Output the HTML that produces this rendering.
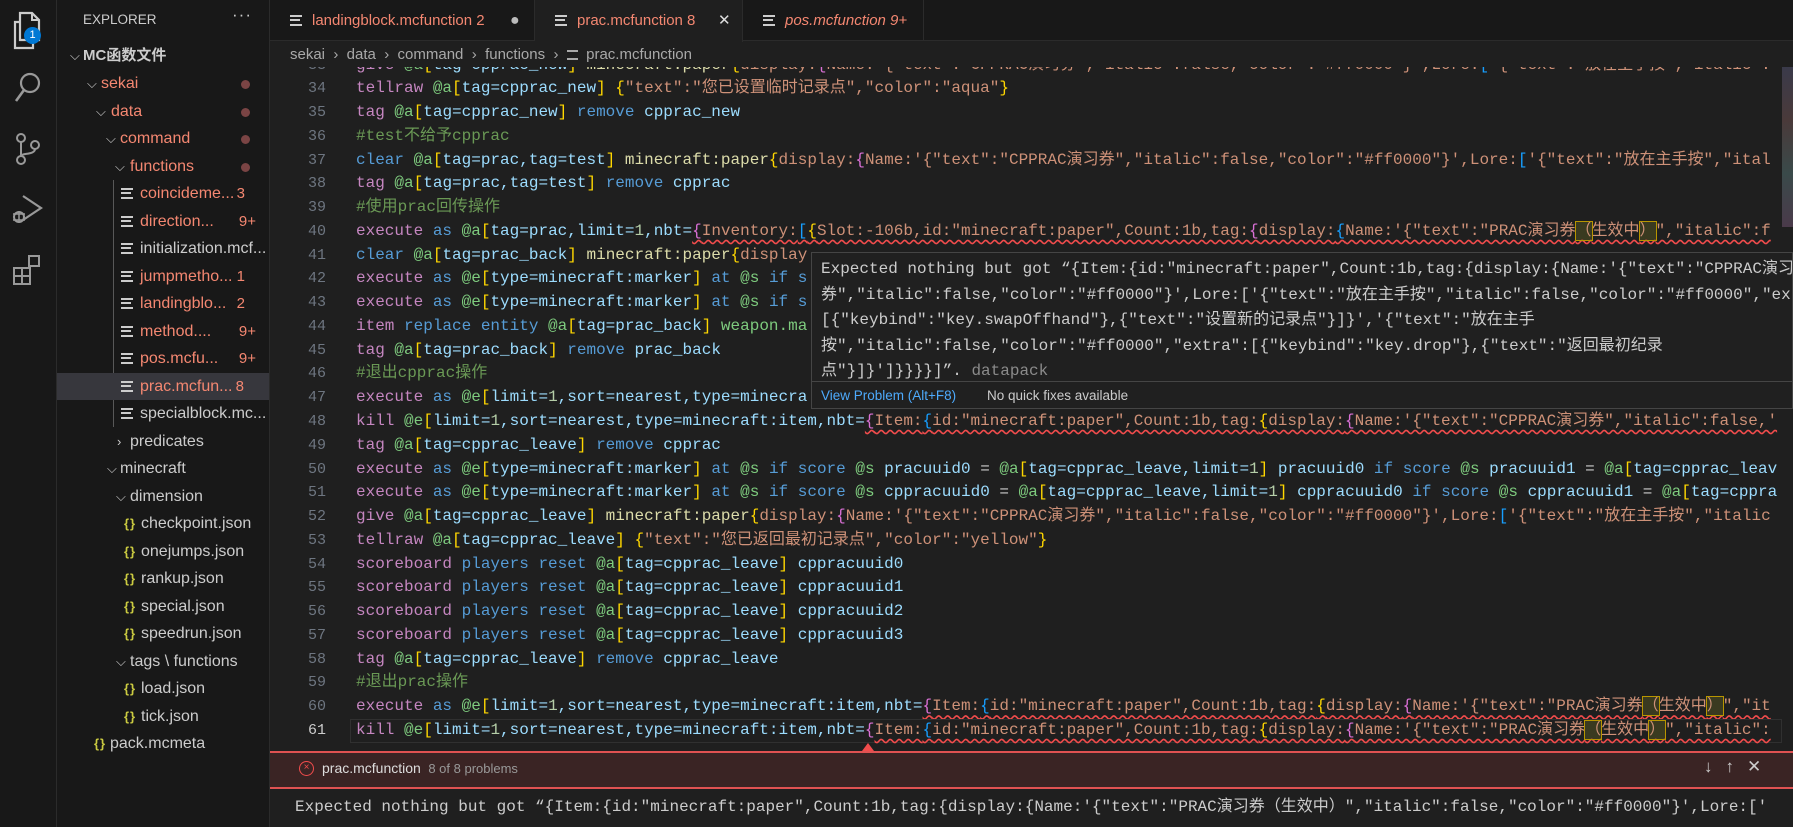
<!DOCTYPE html>
<html><head><meta charset="utf-8"><style>
*{margin:0;padding:0;box-sizing:border-box}
body{width:1793px;height:827px;overflow:hidden;background:#1f1f1f;position:relative;font-family:"Liberation Sans","Noto Sans CJK SC",sans-serif;color:#ccc}
.abs{position:absolute}
#act{left:0;top:0;width:57px;height:827px;background:#181818;border-right:1px solid #2b2b2b}
#side{left:57px;top:0;width:213px;height:827px;background:#181818;border-right:1px solid #2b2b2b;overflow:hidden}
.row{position:absolute;left:0;width:213px;height:27.5px;line-height:27.5px;font-size:16px;white-space:nowrap;color:#ccc}
.red{color:#f48771}
.chev{position:absolute;top:0;font-size:13px;color:#ccc}
.fi{position:absolute;top:8px;width:12px;height:11px;border-top:2px solid #ccc;border-bottom:2px solid #ccc}
.fi:before{content:"";position:absolute;left:0;top:2px;width:10px;height:2px;background:#ccc}
.js{position:absolute;color:#cbcb41;font-weight:bold;font-size:13px;letter-spacing:1px}
.dot{position:absolute;left:184px;top:10px;width:9px;height:9px;border-radius:50%;background:#7a4444}
.badge{position:absolute;right:20px;font-size:15px}
#tabs{left:270px;top:0;width:1523px;height:41px;background:#181818;border-bottom:1px solid #2b2b2b}
.tab{position:absolute;top:0;height:41px;line-height:41px;font-size:15px;border-right:1px solid #2b2b2b;white-space:nowrap;padding-left:42px}
.tab .ti{position:absolute;left:20px;top:15px;width:12px;height:11px;border-top:2px solid #ccc;border-bottom:2px solid #ccc}
.tab .ti:before{content:"";position:absolute;left:0;top:2px;width:10px;height:2px;background:#ccc}
#bc{left:270px;top:42px;width:1523px;height:26px;font-size:15px;line-height:26px;color:#a9a9a9;padding-left:20px;white-space:nowrap}
#ed{left:270px;top:67px;width:1512px;height:684px;overflow:hidden}
#code{position:absolute;left:0;top:-13.5px;width:1512px;font-family:"Liberation Mono","Noto Sans CJK SC",monospace;font-size:16px;line-height:23.78px;white-space:normal}
.ln{display:block;position:relative;height:23.78px}
.ln i{font-style:normal;position:absolute;left:0;width:56px;text-align:right;color:#6e7681;font-size:15px}
.ln b{font-weight:normal;position:absolute;left:86px;white-space:pre}
.k{color:#c586c0}.bl{color:#569cd6}.s{color:#7ecb7e}.y{color:#ffd700}.p{color:#da70d6}.c{color:#179fff}.v{color:#9cdcfe}.st{color:#ce9178}.cm{color:#6a9955}.n{color:#b5cea8}.id{color:#dcdcaa}.pl{color:#9cdcfe}
.sq{text-decoration:underline wavy #f14c4c;text-underline-offset:4px}
.hl{outline:1px solid #b89500;background:#3a3a20}
#hover{left:811px;top:252px;width:982px;height:157px;background:#202020;border:1px solid #454545;font-family:"Liberation Mono","Noto Sans CJK SC",monospace;font-size:16px;overflow:hidden;color:#cccccc}
#hover .t{position:absolute;left:9px;white-space:pre}
#prob{left:270px;top:751px;width:1523px;height:76px;background:#1f1f1f}
</style></head><body>
<div id="act" class="abs">
<svg class="abs" style="left:12px;top:10px" width="34" height="40" viewBox="0 0 34 40"><path d="M8 3h12l7 7v20H8z" fill="none" stroke="#ccc" stroke-width="2.2"/><path d="M20 3v7h7" fill="none" stroke="#ccc" stroke-width="2"/><path d="M8 12H3v26h18v-8" fill="none" stroke="#ccc" stroke-width="2.2"/></svg>
<div class="abs" style="left:24px;top:27px;width:17px;height:17px;border-radius:50%;background:#0078d4;color:#fff;font-size:11px;text-align:center;line-height:17px">1</div>
<svg class="abs" style="left:13px;top:71px" width="30" height="34" viewBox="0 0 30 34"><circle cx="17" cy="12" r="9" fill="none" stroke="#999" stroke-width="2.2"/><path d="M11 19L3 30" stroke="#999" stroke-width="2.6"/></svg>
<svg class="abs" style="left:14px;top:132px" width="28" height="34" viewBox="0 0 28 34"><circle cx="7" cy="6" r="4" fill="none" stroke="#999" stroke-width="2"/><circle cx="7" cy="28" r="4" fill="none" stroke="#999" stroke-width="2"/><circle cx="21" cy="13" r="4" fill="none" stroke="#999" stroke-width="2"/><path d="M7 10v14M21 17c0 6-14 4-14 7" fill="none" stroke="#999" stroke-width="2"/></svg>
<svg class="abs" style="left:11px;top:192px" width="34" height="34" viewBox="0 0 34 34"><path d="M12 4l18 12-18 12" fill="none" stroke="#999" stroke-width="2.2"/><circle cx="8" cy="25" r="5" fill="none" stroke="#999" stroke-width="2"/><path d="M2 22h12M2 28h12M8 19v12" stroke="#999" stroke-width="1.5"/></svg>
<svg class="abs" style="left:12px;top:254px" width="32" height="32" viewBox="0 0 32 32"><rect x="2" y="14" width="8" height="8" fill="none" stroke="#999" stroke-width="2"/><rect x="10" y="14" width="8" height="8" fill="none" stroke="#999" stroke-width="2"/><rect x="2" y="22" width="8" height="8" fill="none" stroke="#999" stroke-width="2"/><rect x="10" y="22" width="8" height="8" fill="none" stroke="#999" stroke-width="2"/><rect x="17" y="2" width="10" height="10" fill="none" stroke="#999" stroke-width="2"/></svg>
</div>
<div id="side" class="abs">
<div class="abs" style="left:26px;top:12px;font-size:13.5px;color:#ccc">EXPLORER</div>
<div class="abs" style="left:175px;top:5px;font-size:17px;color:#ccc;letter-spacing:1px">···</div>
<div class="row" style="top:42px"><span class="chev" style="left:13px">⌵</span><b style="position:absolute;left:26px;font-size:15px">MC函数文件</b></div>
<div class="row" style="top:70px"><span class="chev" style="left:30px">⌵</span><span class="red" style="position:absolute;left:44px">sekai</span><span class="dot"></span></div>
<div class="row" style="top:97.5px"><span class="chev" style="left:39px">⌵</span><span class="red" style="position:absolute;left:54px">data</span><span class="dot"></span></div>
<div class="row" style="top:125px"><span class="chev" style="left:49px">⌵</span><span class="red" style="position:absolute;left:63px">command</span><span class="dot"></span></div>
<div class="row" style="top:152.5px"><span class="chev" style="left:58px">⌵</span><span class="red" style="position:absolute;left:73px">functions</span><span class="dot"></span></div>
<div class="abs" style="left:56px;top:180px;width:1px;height:247px;background:#585858"></div>
<div class="row" style="top:180px"><span class="fi" style="left:64px"></span><span class="red" style="position:absolute;left:83px">coincideme...</span><span class="badge red" style="right:25px">3</span></div>
<div class="row" style="top:207.5px"><span class="fi" style="left:64px"></span><span class="red" style="position:absolute;left:83px">direction...</span><span class="badge red" style="right:14px">9+</span></div>
<div class="row" style="top:235px"><span class="fi" style="left:64px"></span><span style="position:absolute;left:83px">initialization.mcf...</span></div>
<div class="row" style="top:262.5px"><span class="fi" style="left:64px"></span><span class="red" style="position:absolute;left:83px">jumpmetho...</span><span class="badge red" style="right:25px">1</span></div>
<div class="row" style="top:290px"><span class="fi" style="left:64px"></span><span class="red" style="position:absolute;left:83px">landingblo...</span><span class="badge red" style="right:25px">2</span></div>
<div class="row" style="top:317.5px"><span class="fi" style="left:64px"></span><span class="red" style="position:absolute;left:83px">method....</span><span class="badge red" style="right:14px">9+</span></div>
<div class="row" style="top:345px"><span class="fi" style="left:64px"></span><span class="red" style="position:absolute;left:83px">pos.mcfu...</span><span class="badge red" style="right:14px">9+</span></div>
<div class="row" style="top:372.5px;background:#37373d;width:212px"><span class="fi" style="left:64px"></span><span class="red" style="position:absolute;left:83px">prac.mcfun...</span><span class="badge red" style="right:25px">8</span></div>
<div class="row" style="top:400px"><span class="fi" style="left:64px"></span><span style="position:absolute;left:83px">specialblock.mc...</span></div>
<div class="row" style="top:427.5px"><span class="chev" style="left:60px">›</span><span style="position:absolute;left:73px">predicates</span></div>
<div class="row" style="top:455px"><span class="chev" style="left:50px">⌵</span><span style="position:absolute;left:63px">minecraft</span></div>
<div class="row" style="top:482.5px"><span class="chev" style="left:59px">⌵</span><span style="position:absolute;left:73px">dimension</span></div>
<div class="row" style="top:510px"><span class="js" style="left:67px">{}</span><span style="position:absolute;left:84px">checkpoint.json</span></div>
<div class="row" style="top:537.5px"><span class="js" style="left:67px">{}</span><span style="position:absolute;left:84px">onejumps.json</span></div>
<div class="row" style="top:565px"><span class="js" style="left:67px">{}</span><span style="position:absolute;left:84px">rankup.json</span></div>
<div class="row" style="top:592.5px"><span class="js" style="left:67px">{}</span><span style="position:absolute;left:84px">special.json</span></div>
<div class="row" style="top:620px"><span class="js" style="left:67px">{}</span><span style="position:absolute;left:84px">speedrun.json</span></div>
<div class="row" style="top:647.5px"><span class="chev" style="left:59px">⌵</span><span style="position:absolute;left:73px">tags \ functions</span></div>
<div class="row" style="top:675px"><span class="js" style="left:67px">{}</span><span style="position:absolute;left:84px">load.json</span></div>
<div class="row" style="top:702.5px"><span class="js" style="left:67px">{}</span><span style="position:absolute;left:84px">tick.json</span></div>
<div class="row" style="top:730px"><span class="js" style="left:37px">{}</span><span style="position:absolute;left:53px">pack.mcmeta</span></div>
</div>
<div id="tabs" class="abs">
<div class="tab red" style="left:0;width:265px"><span class="ti"></span>landingblock.mcfunction 2 <span style="color:#bbb;position:absolute;left:240px;font-size:16px">●</span></div>
<div class="tab red" style="left:265px;width:208px;background:#1f1f1f;height:42px"><span class="ti"></span>prac.mcfunction 8 <span style="color:#ddd;position:absolute;left:183px">✕</span></div>
<div class="tab red" style="left:473px;width:181px;font-style:italic"><span class="ti"></span>pos.mcfunction 9+</div>
</div>
<div id="bc" class="abs">sekai &nbsp;›&nbsp; data &nbsp;›&nbsp; command &nbsp;›&nbsp; functions &nbsp;›&nbsp; <span style="display:inline-block;width:11px;height:10px;border-top:2px solid #aaa;border-bottom:2px solid #aaa;vertical-align:-1px"></span>&nbsp; prac.mcfunction</div>
<div id="ed" class="abs"><div id="code">
<span class="ln"><i>33</i><b><span class="k">give</span> <span class="s">@a</span><span class="y">[</span><span class="v">tag=cpprac_new</span><span class="y">]</span> <span class="id">minecraft:paper</span><span class="y">{</span><span class="st">display:</span><span class="p">{</span><span class="st">Name:'{"text":"CPPRAC演习券","italic":false,"color":"#ff0000"}',Lore:</span><span class="c">[</span><span class="st">'{"text":"放在主手按","italic":</span></b></span>
<span class="ln"><i>34</i><b><span class="k">tellraw</span> <span class="s">@a</span><span class="y">[</span><span class="v">tag=cpprac_new</span><span class="y">]</span> <span class="y">{</span><span class="st">"text":"您已设置临时记录点","color":"aqua"</span><span class="y">}</span></b></span>
<span class="ln"><i>35</i><b><span class="k">tag</span> <span class="s">@a</span><span class="y">[</span><span class="v">tag=cpprac_new</span><span class="y">]</span> <span class="bl">remove</span> <span class="pl">cpprac_new</span></b></span>
<span class="ln"><i>36</i><b><span class="cm">#test不给予cpprac</span></b></span>
<span class="ln"><i>37</i><b><span class="bl">clear</span> <span class="s">@a</span><span class="y">[</span><span class="v">tag=prac,tag=test</span><span class="y">]</span> <span class="id">minecraft:paper</span><span class="y">{</span><span class="st">display:</span><span class="p">{</span><span class="st">Name:'{"text":"CPPRAC演习券","italic":false,"color":"#ff0000"}',Lore:</span><span class="c">[</span><span class="st">'{"text":"放在主手按","ital</span></b></span>
<span class="ln"><i>38</i><b><span class="k">tag</span> <span class="s">@a</span><span class="y">[</span><span class="v">tag=prac,tag=test</span><span class="y">]</span> <span class="bl">remove</span> <span class="pl">cpprac</span></b></span>
<span class="ln"><i>39</i><b><span class="cm">#使用prac回传操作</span></b></span>
<span class="ln"><i>40</i><b><span class="k">execute</span> <span class="bl">as</span> <span class="s">@a</span><span class="y">[</span><span class="v">tag=prac,limit=</span><span class="n">1</span><span class="v">,nbt=</span><span class="sq"><span class="p">{</span><span class="st">Inventory:</span><span class="c">[</span><span class="y">{</span><span class="st">Slot:-106b,id:"minecraft:paper",Count:1b,tag:</span><span class="p">{</span><span class="st">display:</span><span class="c">{</span><span class="st">Name:'{"text":"PRAC演习券<span class="hl">（</span>生效中<span class="hl">）</span>","italic":f</span></span></b></span>
<span class="ln"><i>41</i><b><span class="bl">clear</span> <span class="s">@a</span><span class="y">[</span><span class="v">tag=prac_back</span><span class="y">]</span> <span class="id">minecraft:paper</span><span class="y">{</span><span class="st">display</span></b></span>
<span class="ln"><i>42</i><b><span class="k">execute</span> <span class="bl">as</span> <span class="s">@e</span><span class="y">[</span><span class="v">type=minecraft:marker</span><span class="y">]</span> <span class="bl">at</span> <span class="s">@s</span> <span class="bl">if</span> <span class="bl">s</span></b></span>
<span class="ln"><i>43</i><b><span class="k">execute</span> <span class="bl">as</span> <span class="s">@e</span><span class="y">[</span><span class="v">type=minecraft:marker</span><span class="y">]</span> <span class="bl">at</span> <span class="s">@s</span> <span class="bl">if</span> <span class="bl">s</span></b></span>
<span class="ln"><i>44</i><b><span class="k">item</span> <span class="bl">replace entity</span> <span class="s">@a</span><span class="y">[</span><span class="v">tag=prac_back</span><span class="y">]</span> <span class="s">weapon.ma</span></b></span>
<span class="ln"><i>45</i><b><span class="k">tag</span> <span class="s">@a</span><span class="y">[</span><span class="v">tag=prac_back</span><span class="y">]</span> <span class="bl">remove</span> <span class="pl">prac_back</span></b></span>
<span class="ln"><i>46</i><b><span class="cm">#退出cpprac操作</span></b></span>
<span class="ln"><i>47</i><b><span class="k">execute</span> <span class="bl">as</span> <span class="s">@e</span><span class="y">[</span><span class="v">limit=</span><span class="n">1</span><span class="v">,sort=nearest,type=minecra</span></b></span>
<span class="ln"><i>48</i><b><span class="k">kill</span> <span class="s">@e</span><span class="y">[</span><span class="v">limit=</span><span class="n">1</span><span class="v">,sort=nearest,type=minecraft:item,nbt=</span><span class="sq"><span class="p">{</span><span class="st">Item:</span><span class="c">{</span><span class="st">id:"minecraft:paper",Count:1b,tag:</span><span class="y">{</span><span class="st">display:</span><span class="p">{</span><span class="st">Name:'{"text":"CPPRAC演习券","italic":false,'</span></span></b></span>
<span class="ln"><i>49</i><b><span class="k">tag</span> <span class="s">@a</span><span class="y">[</span><span class="v">tag=cpprac_leave</span><span class="y">]</span> <span class="bl">remove</span> <span class="pl">cpprac</span></b></span>
<span class="ln"><i>50</i><b><span class="k">execute</span> <span class="bl">as</span> <span class="s">@e</span><span class="y">[</span><span class="v">type=minecraft:marker</span><span class="y">]</span> <span class="bl">at</span> <span class="s">@s</span> <span class="bl">if score</span> <span class="s">@s</span> <span class="pl">pracuuid0</span> = <span class="s">@a</span><span class="y">[</span><span class="v">tag=cpprac_leave,limit=</span><span class="n">1</span><span class="y">]</span> <span class="pl">pracuuid0</span> <span class="bl">if score</span> <span class="s">@s</span> <span class="pl">pracuuid1</span> = <span class="s">@a</span><span class="y">[</span><span class="v">tag=cpprac_leav</span></b></span>
<span class="ln"><i>51</i><b><span class="k">execute</span> <span class="bl">as</span> <span class="s">@e</span><span class="y">[</span><span class="v">type=minecraft:marker</span><span class="y">]</span> <span class="bl">at</span> <span class="s">@s</span> <span class="bl">if score</span> <span class="s">@s</span> <span class="pl">cppracuuid0</span> = <span class="s">@a</span><span class="y">[</span><span class="v">tag=cpprac_leave,limit=</span><span class="n">1</span><span class="y">]</span> <span class="pl">cppracuuid0</span> <span class="bl">if score</span> <span class="s">@s</span> <span class="pl">cppracuuid1</span> = <span class="s">@a</span><span class="y">[</span><span class="v">tag=cppra</span></b></span>
<span class="ln"><i>52</i><b><span class="k">give</span> <span class="s">@a</span><span class="y">[</span><span class="v">tag=cpprac_leave</span><span class="y">]</span> <span class="id">minecraft:paper</span><span class="y">{</span><span class="st">display:</span><span class="p">{</span><span class="st">Name:'{"text":"CPPRAC演习券","italic":false,"color":"#ff0000"}',Lore:</span><span class="c">[</span><span class="st">'{"text":"放在主手按","italic</span></b></span>
<span class="ln"><i>53</i><b><span class="k">tellraw</span> <span class="s">@a</span><span class="y">[</span><span class="v">tag=cpprac_leave</span><span class="y">]</span> <span class="y">{</span><span class="st">"text":"您已返回最初记录点","color":"yellow"</span><span class="y">}</span></b></span>
<span class="ln"><i>54</i><b><span class="k">scoreboard</span> <span class="bl">players reset</span> <span class="s">@a</span><span class="y">[</span><span class="v">tag=cpprac_leave</span><span class="y">]</span> <span class="pl">cppracuuid0</span></b></span>
<span class="ln"><i>55</i><b><span class="k">scoreboard</span> <span class="bl">players reset</span> <span class="s">@a</span><span class="y">[</span><span class="v">tag=cpprac_leave</span><span class="y">]</span> <span class="pl">cppracuuid1</span></b></span>
<span class="ln"><i>56</i><b><span class="k">scoreboard</span> <span class="bl">players reset</span> <span class="s">@a</span><span class="y">[</span><span class="v">tag=cpprac_leave</span><span class="y">]</span> <span class="pl">cppracuuid2</span></b></span>
<span class="ln"><i>57</i><b><span class="k">scoreboard</span> <span class="bl">players reset</span> <span class="s">@a</span><span class="y">[</span><span class="v">tag=cpprac_leave</span><span class="y">]</span> <span class="pl">cppracuuid3</span></b></span>
<span class="ln"><i>58</i><b><span class="k">tag</span> <span class="s">@a</span><span class="y">[</span><span class="v">tag=cpprac_leave</span><span class="y">]</span> <span class="bl">remove</span> <span class="pl">cpprac_leave</span></b></span>
<span class="ln"><i>59</i><b><span class="cm">#退出prac操作</span></b></span>
<span class="ln"><i>60</i><b><span class="k">execute</span> <span class="bl">as</span> <span class="s">@e</span><span class="y">[</span><span class="v">limit=</span><span class="n">1</span><span class="v">,sort=nearest,type=minecraft:item,nbt=</span><span class="sq"><span class="p">{</span><span class="st">Item:</span><span class="c">{</span><span class="st">id:"minecraft:paper",Count:1b,tag:</span><span class="y">{</span><span class="st">display:</span><span class="p">{</span><span class="st">Name:'{"text":"PRAC演习券<span class="hl">（</span>生效中<span class="hl">）</span>","it</span></span></b></span>
<span class="ln" style="outline:1px solid #303030;outline-offset:-1px;margin-left:80px"><i style="left:-80px;color:#ccc">61</i><b style="left:6px"><span class="k">kill</span> <span class="s">@e</span><span class="y">[</span><span class="v">limit=</span><span class="n">1</span><span class="v">,sort=nearest,type=minecraft:item,nbt=</span><span class="p">{</span><span class="sq"><span class="st">Item:</span><span class="c">{</span><span class="st">id:"minecraft:paper",Count:1b,tag:</span><span class="y">{</span><span class="st">display:</span><span class="p">{</span><span class="st">Name:'{"text":"PRAC演习券<span class="hl">（</span>生效中<span class="hl">）</span>","italic":</span></span></b></span>
</div>
</div>
<div class="abs" style="left:1782px;top:67px;width:11px;height:160px;background:linear-gradient(#3a3a4a,#4a3a3a,#3a4a4a,#4a3a4a)"></div>
<div class="abs" style="left:862px;top:743px;width:0;height:0;border-left:6px solid transparent;border-right:6px solid transparent;border-bottom:8px solid #f14c4c"></div>
<div id="hover" class="abs">
<div class="t" style="top:1px">Expected nothing but got “{Item:{id:"minecraft:paper",Count:1b,tag:{display:{Name:'{"text":"CPPRAC演习</div>
<div class="t" style="top:27px">券","italic":false,"color":"#ff0000"}',Lore:['{"text":"放在主手按","italic":false,"color":"#ff0000","extra":</div>
<div class="t" style="top:52px">[{"keybind":"key.swapOffhand"},{"text":"设置新的记录点"}]}','{"text":"放在主手</div>
<div class="t" style="top:78px">按","italic":false,"color":"#ff0000","extra":[{"keybind":"key.drop"},{"text":"返回最初纪录</div>
<div class="t" style="top:103px">点"}]}']}}}}]”. <span style="color:#8b8b8b">datapack</span></div>
<div class="abs" style="left:0;top:128px;width:100%;height:1px;background:#454545"></div>
<div class="abs" style="left:9px;top:135px;font-family:'Liberation Sans',sans-serif;font-size:13.5px;color:#4daafc;white-space:nowrap">View Problem (Alt+F8)</div>
<div class="abs" style="left:175px;top:135px;font-family:'Liberation Sans',sans-serif;font-size:13.5px;color:#ccc;white-space:nowrap">No quick fixes available</div>
</div>
<div id="prob" class="abs">
<div class="abs" style="left:0;top:0;width:1523px;height:38px;background:#3a2424;border-top:2px solid #e05252;border-bottom:2px solid #e05252"></div>
<div class="abs" style="left:29px;top:10px;width:15px;height:15px;border:1.5px solid #f14c4c;border-radius:50%;color:#f14c4c;font-size:10px;line-height:12px;text-align:center">×</div>
<div class="abs" style="left:52px;top:9px;font-size:14px;color:#ddd;white-space:nowrap">prac.mcfunction <span style="color:#999;font-size:13px">&nbsp;8 of 8 problems</span></div>
<div class="abs" style="left:1434px;top:6px;font-size:17px;color:#ccc;letter-spacing:13px;white-space:nowrap">↓↑✕</div>
<div class="abs" style="left:25px;top:41px;font-family:'Liberation Mono','Noto Sans CJK SC',monospace;font-size:16px;color:#ccc;white-space:pre">Expected nothing but got “{Item:{id:"minecraft:paper",Count:1b,tag:{display:{Name:'{"text":"PRAC演习券（生效中）","italic":false,"color":"#ff0000"}',Lore:['</div>
</div>
</body></html>
